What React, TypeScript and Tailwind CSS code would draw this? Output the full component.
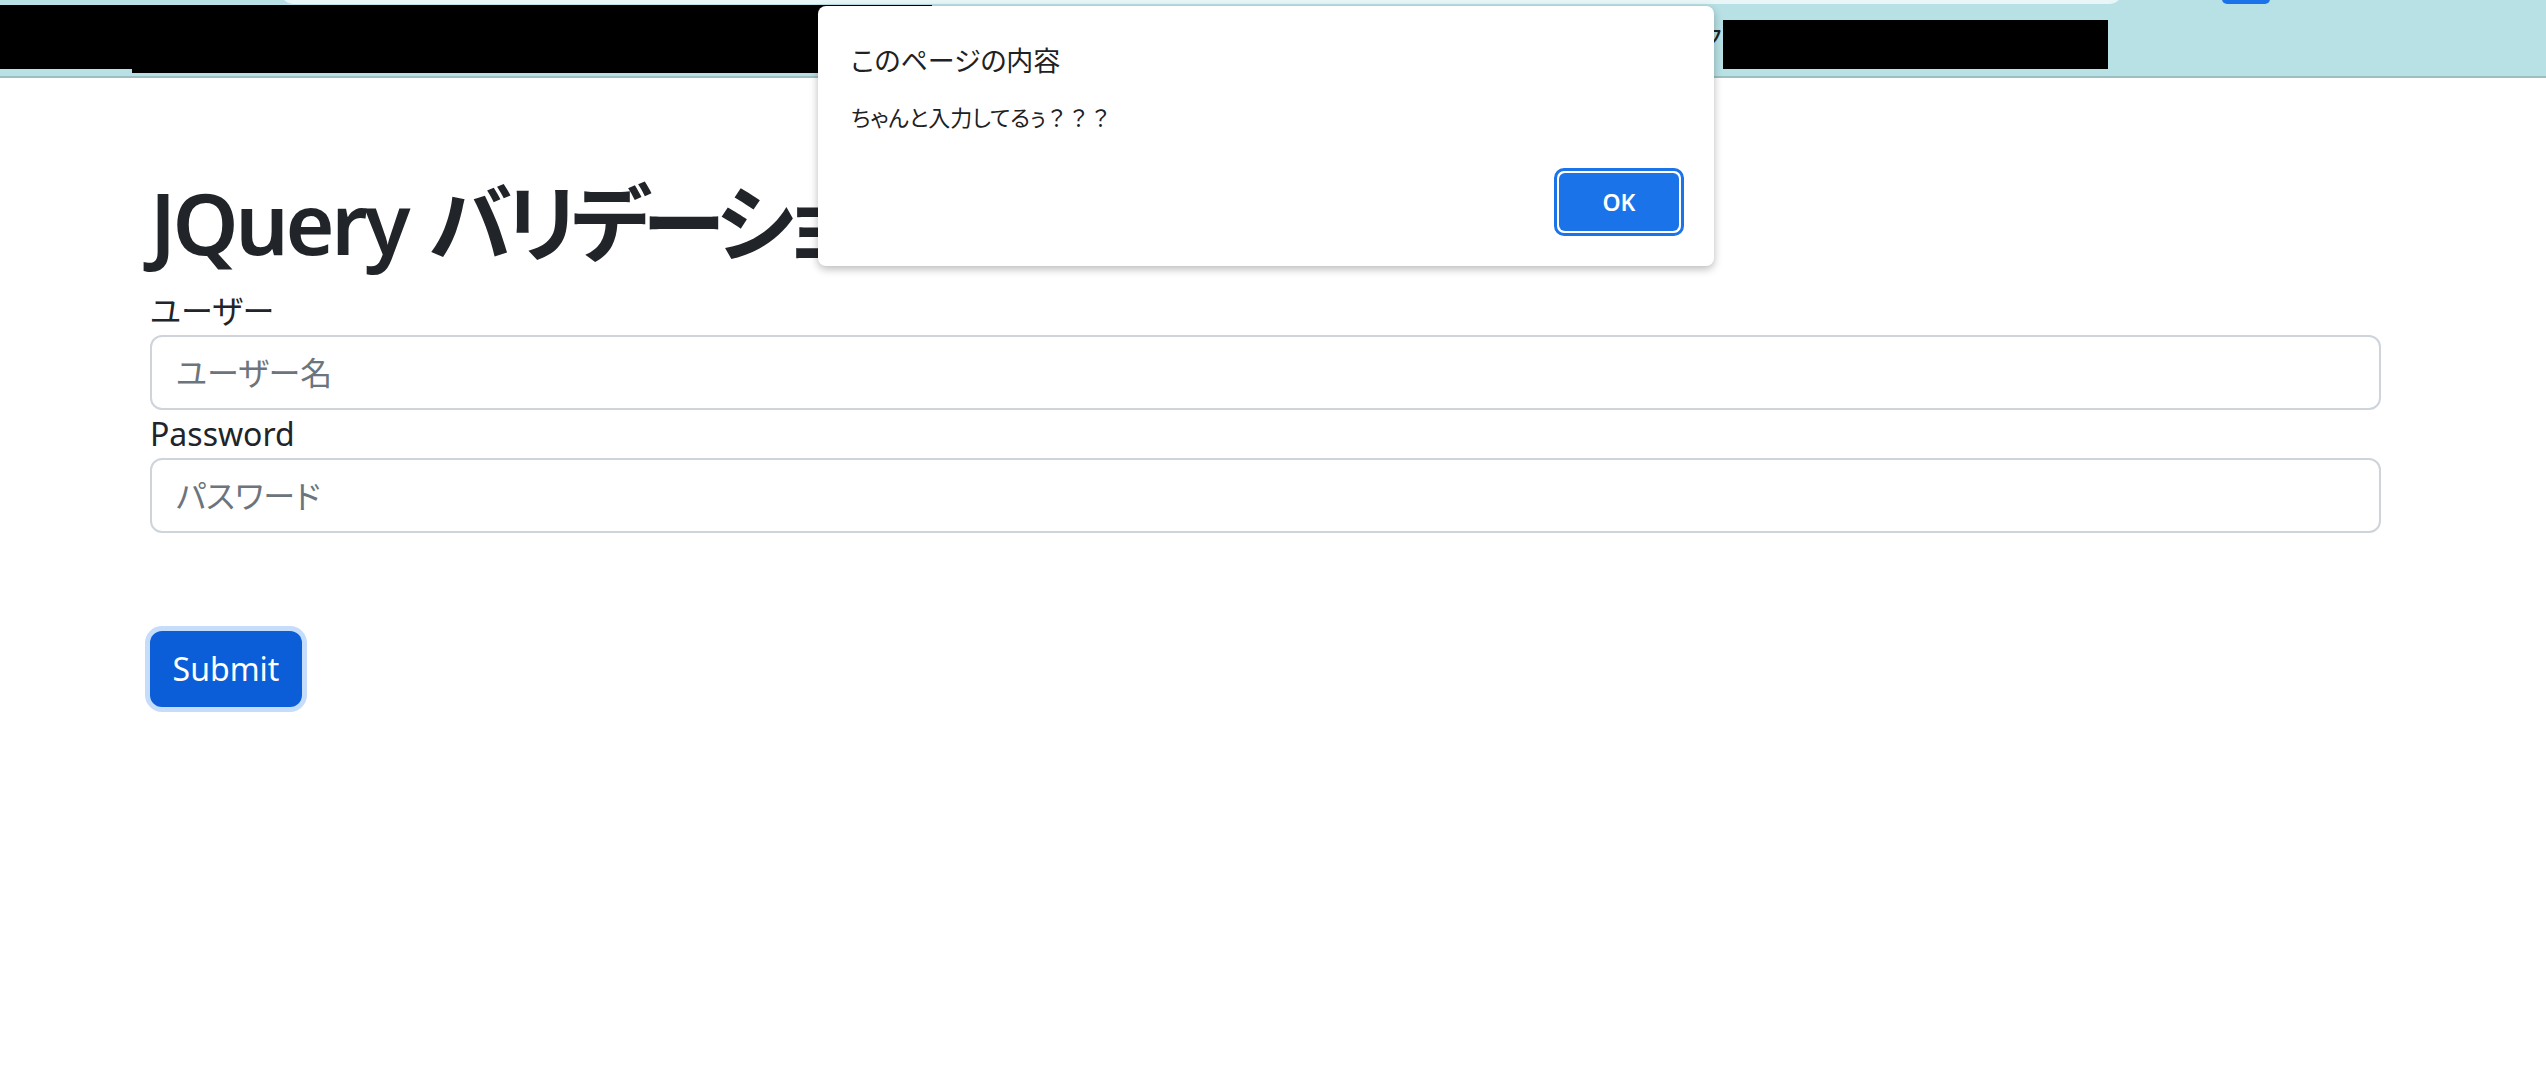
import React from 'react';

export default function App() {
  return (
    <div className="min-h-screen bg-white relative overflow-hidden font-['Noto_Sans','Noto_Sans_CJK_JP',sans-serif] [font-feature-settings:'palt'] text-[#212529]">

      {/* Browser bookmarks bar (redacted) */}
      <div className="relative h-[78px] bg-[#b8e1e5] border-b-2 border-[#9cbfc2] overflow-hidden flex items-start">
        <div className="absolute left-[280px] top-[-24px] w-[1843px] h-[28px] rounded-[14px] bg-[#e9f6f7]" />
        <div className="absolute left-[2222px] top-[-8px] w-[48px] h-[12px] rounded-[5px] bg-[#1a73e8]" />

        <div className="relative flex items-start mt-[5px] w-[932px] shrink-0">
          <div className="w-[132px] h-[64px] bg-black" />
          <div className="flex-1 h-[68px] bg-black" />
        </div>
        <span className="ml-[766px] mt-[20px] w-[25px] shrink-0 text-[26px] leading-[34px] text-[#202124] [font-feature-settings:normal]">ク</span>
        <div className="mt-[20px] w-[385px] h-[49px] shrink-0 bg-black" />
      </div>

      {/* Page */}
      <main className="pl-[150px] pr-[165px] pt-[97px]">
        <h1 className="text-[84px] font-semibold leading-[96px] mb-[16px]">
          <span className="tracking-[-0.04em]">JQuery</span> <span className="tracking-[-0.08em]">バリデーション</span>
        </h1>
        <form onSubmit={e => e.preventDefault()}>
          <label className="block text-[32px] leading-[48px]">ユーザー</label>
          <input
            type="text"
            placeholder="ユーザー名"
            className="block w-full h-[75px] px-[24px] text-[32px] border-2 border-[#ced4da] rounded-[12px] bg-white placeholder:text-[#6c757d] outline-none"
          />
          <label className="block text-[32px] leading-[48px]">Password</label>
          <input
            type="password"
            placeholder="パスワード"
            className="block w-full h-[75px] px-[24px] text-[32px] border-2 border-[#ced4da] rounded-[12px] bg-white placeholder:text-[#6c757d] outline-none"
          />
          <button
            type="submit"
            className="mt-[98px] w-[152px] h-[76px] rounded-[12px] bg-[#0b5ed7] text-white text-[32px] leading-none ring-[5px] ring-[#c6dcfb]"
          >
            Submit
          </button>
        </form>
      </main>

      {/* Alert dialog */}
      <div className="absolute left-[818px] top-[6px] w-[896px] h-[260px] bg-white rounded-[8px] shadow-[0_3px_8px_rgba(0,0,0,0.28)] flex flex-col pl-[33px] pb-[30px] pr-[30px] text-[#202124]">
        <div className="mt-[36px] text-[27px] leading-[38px]">このページの内容</div>
        <div className="mt-[21px] text-[22px] leading-[32px]">
          ちゃんと入力してるぅ<span className="[font-feature-settings:normal]">？？？</span>
        </div>
        <div className="mt-auto flex justify-end">
          <button className="w-[130px] h-[68px] rounded-[10px] border-[3px] border-[#1a73e8] p-[2px] bg-white">
            <span className="flex items-center justify-center w-full h-full rounded-[6px] bg-[#1a73e8] text-white text-[23px] font-semibold">
              OK
            </span>
          </button>
        </div>
      </div>
    </div>
  );
}
